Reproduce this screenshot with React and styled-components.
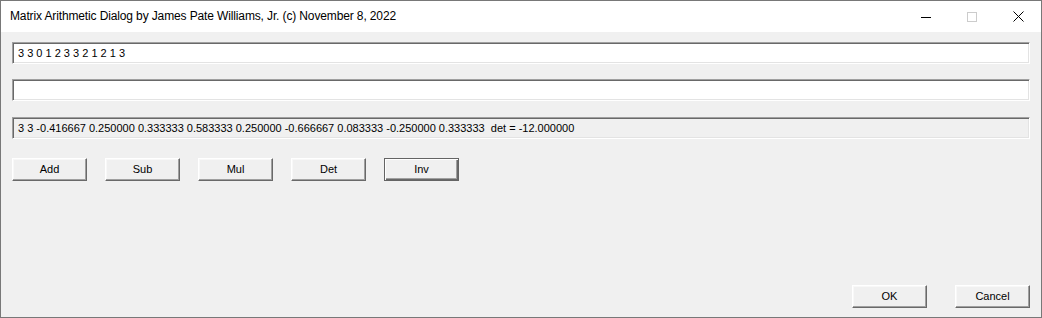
import styled, { createGlobalStyle, css } from 'styled-components'

const GlobalStyle = createGlobalStyle`
html, body {
    margin: 0;
    padding: 0;
    background: #ffffff;
}
`

const Window = styled.div`
width: 1042px;
height: 318px;
box-sizing: border-box;
border: 1px solid #787878;
background: #f0f0f0;
display: flex;
flex-direction: column;
font-family: "Liberation Sans", Arial, sans-serif;
`

const TitleBar = styled.div`
height: 31px;
background: #ffffff;
display: flex;
align-items: center;
flex-shrink: 0;
`

const Title = styled.span`
flex: 1;
padding-left: 9px;
font-size: 12px;
letter-spacing: -0.13px;
color: #000;
padding-bottom: 2px;
`

const CaptionButton = styled.div`
width: 46px;
height: 31px;
display: flex;
align-items: center;
justify-content: center;
`

const Content = styled.div`
flex: 1;
display: flex;
flex-direction: column;
padding: 10px 11px 9px 11px;
`

const Field = styled.div`
height: 22px;
box-sizing: border-box;
border: 1px solid;
border-color: #a0a0a0 #ffffff #ffffff #a0a0a0;
box-shadow: inset 1px 1px #696969, inset -1px -1px #e3e3e3;
background: ${p => (p.$readOnly ? '#f0f0f0' : '#ffffff')};
margin-top: ${p => p.$top || 0}px;
padding: 0 5px;
display: flex;
align-items: center;
font-size: 11px;
color: #000;
white-space: pre;
`

const ButtonRow = styled.div`
display: flex;
gap: 18px;
margin-top: 19px;
`

const Footer = styled.div`
margin-top: auto;
display: flex;
justify-content: flex-end;
gap: 28px;
`

const Button = styled.div`
width: 75px;
height: 23px;
box-sizing: border-box;
border: 1px solid;
border-color: #ffffff #696969 #696969 #ffffff;
box-shadow: inset -1px -1px #a0a0a0, inset 1px 1px #f8f8f8;
background: #f0f0f0;
display: flex;
align-items: center;
justify-content: center;
padding-bottom: 1px;
font-size: 11px;
color: #000;
${p => p.$default && css`
    border-color: #646464;
    box-shadow: inset 1px 1px #ffffff, inset -1px -1px #696969, inset -2px -2px #a0a0a0;
`}
`

const App = () => {
    return <>
    <GlobalStyle/>
    <Window>
        <TitleBar>
            <Title>Matrix Arithmetic Dialog by James Pate Williams, Jr. (c) November 8, 2022</Title>
            <CaptionButton>
                <svg width="10" height="10" viewBox="0 0 10 10">
                    <line x1="0" y1="5.5" x2="10" y2="5.5" stroke="#000" strokeWidth="1"/>
                </svg>
            </CaptionButton>
            <CaptionButton>
                <svg width="10" height="10" viewBox="0 0 10 10">
                    <rect x="0.5" y="0.5" width="9" height="9" fill="none" stroke="#cccccc" strokeWidth="1"/>
                </svg>
            </CaptionButton>
            <CaptionButton>
                <svg width="11" height="11" viewBox="0 0 11 11">
                    <path d="M0.5 0.5 L10.5 10.5 M10.5 0.5 L0.5 10.5" stroke="#000" strokeWidth="1"/>
                </svg>
            </CaptionButton>
        </TitleBar>
        <Content>
            <Field>3 3 0 1 2 3 3 2 1 2 1 3</Field>
            <Field $top={15}></Field>
            <Field $top={16} $readOnly>3 3 -0.416667 0.250000 0.333333 0.583333 0.250000 -0.666667 0.083333 -0.250000 0.333333  det = -12.000000</Field>
            <ButtonRow>
                <Button>Add</Button>
                <Button>Sub</Button>
                <Button>Mul</Button>
                <Button>Det</Button>
                <Button $default>Inv</Button>
            </ButtonRow>
            <Footer>
                <Button>OK</Button>
                <Button>Cancel</Button>
            </Footer>
        </Content>
    </Window>
    </>
}

export default App
